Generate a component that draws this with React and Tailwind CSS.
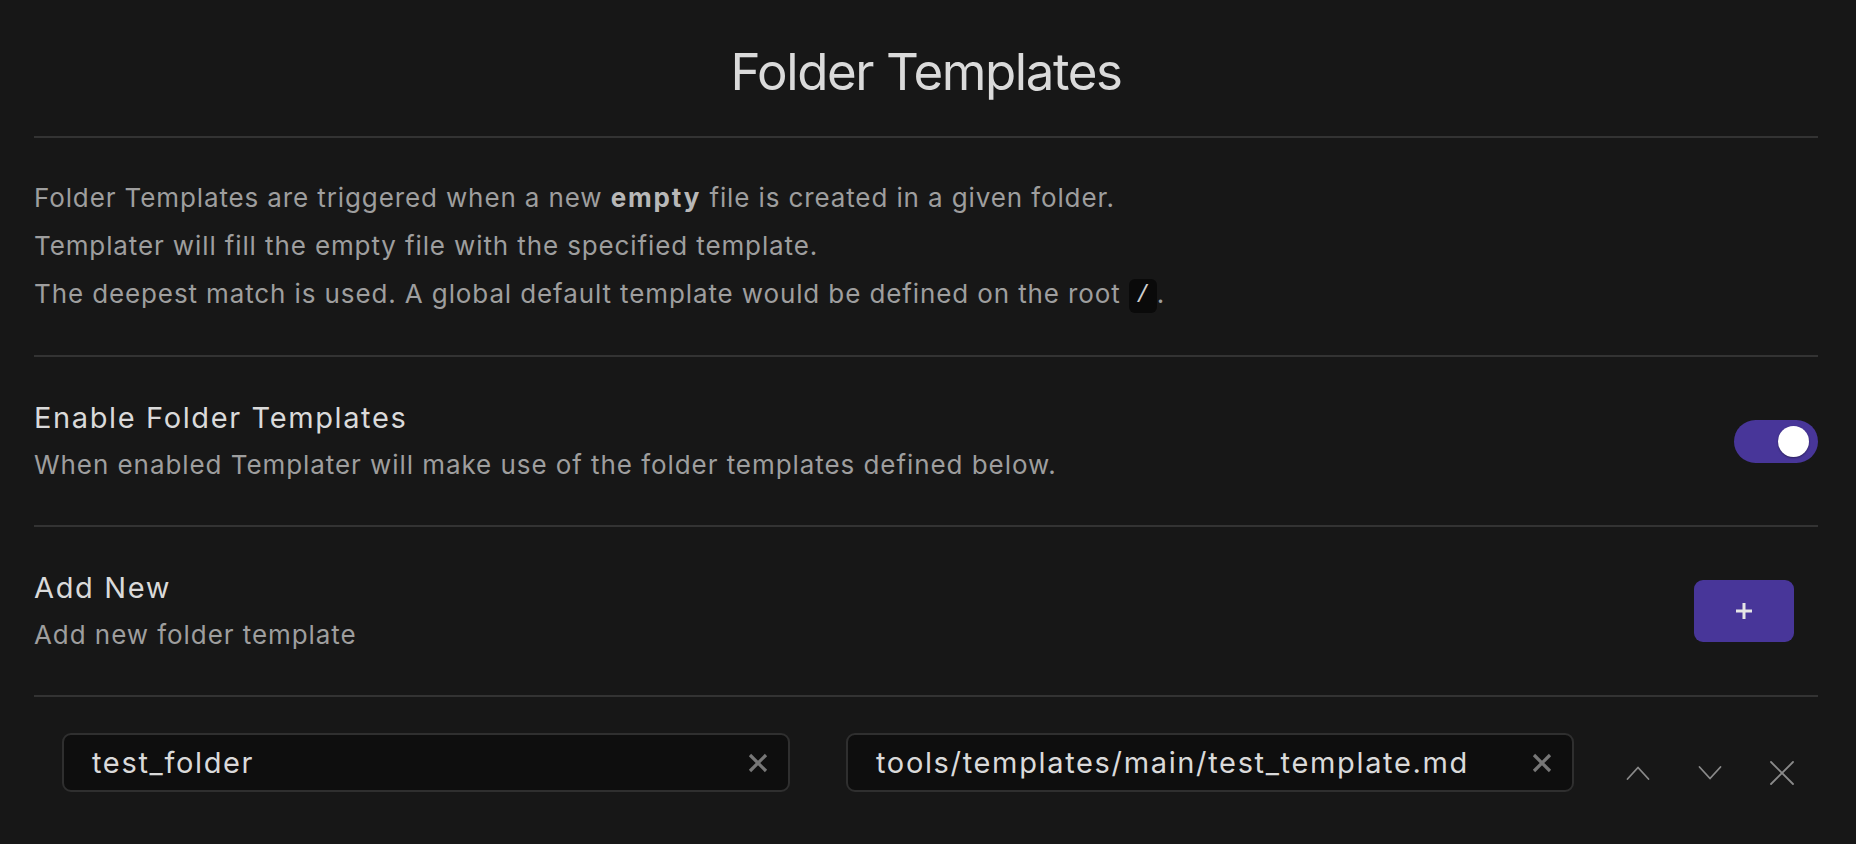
import React, { useState } from "react";

const ChevronUp = () => (
  <svg width="24" height="24" viewBox="0 0 24 24" fill="none" stroke="#8a8a8a" strokeWidth="1.8" strokeLinecap="round" strokeLinejoin="round">
    <polyline points="1.5,18 12,6.5 22.5,18" />
  </svg>
);

const ChevronDown = () => (
  <svg width="24" height="24" viewBox="0 0 24 24" fill="none" stroke="#8a8a8a" strokeWidth="1.8" strokeLinecap="round" strokeLinejoin="round">
    <polyline points="1.5,6 12,17.5 22.5,6" />
  </svg>
);

const Cross = () => (
  <svg width="24" height="24" viewBox="0 0 24 24" fill="none" stroke="#8a8a8a" strokeWidth="1.8" strokeLinecap="round">
    <line x1="1" y1="1" x2="23" y2="23" />
    <line x1="23" y1="1" x2="1" y2="23" />
  </svg>
);

const Clear = () => (
  <svg width="20" height="20" viewBox="0 0 20 20" fill="none" stroke="#777777" strokeWidth="3.2">
    <line x1="2" y1="2" x2="18" y2="18" />
    <line x1="18" y1="2" x2="2" y2="18" />
  </svg>
);

function Divider() {
  return <div className="h-[2px] bg-[#333333]"></div>;
}

function SettingRow({ name, desc, children }) {
  return (
    <div className="h-[168px] flex items-center justify-between">
      <div className="flex flex-col">
        <div className="text-[29px] leading-[47px] tracking-[0.056em] text-[#dadada]">{name}</div>
        <div className="text-[26px] leading-[48px] tracking-[0.036em] text-[#9e9e9e]">{desc}</div>
      </div>
      {children}
    </div>
  );
}

function SearchBox({ value }) {
  return (
    <div className="w-[728px] h-[59px] flex items-center justify-between rounded-[9px] border-2 border-[#2f2f2f] bg-[#0e0e0e] pl-[28px] pr-[20px]">
      <span className="text-[29px] tracking-[0.057em] text-[#dadada]">{value}</span>
      <Clear />
    </div>
  );
}

export default function App() {
  const [enabled, setenabled] = useState(true);

  return (
    <div className="min-h-screen bg-[#171717] pl-[34px] pr-[38px] font-[family-name:Inter,sans-serif]">
      <div className="h-[136px] pt-[9px] flex items-center justify-center">
        <h2 className="text-[51px] tracking-[-0.028em] text-[#dadada]">Folder Templates</h2>
      </div>
      <Divider />
      <div className="pt-[36px] pb-[37px] text-[26px] leading-[48px] tracking-[0.034em] text-[#9e9e9e]">
        <div>
          Folder Templates are triggered when a new{" "}
          <strong className="font-bold tracking-[0.07em] text-[#b8b8b8]">empty</strong> file is created in a given folder.
        </div>
        <div>Templater will fill the empty file with the specified template.</div>
        <div>
          The deepest match is used. A global default template would be defined on the root{" "}
          <code className="inline-block align-middle h-[34px] px-[7px] rounded-[6px] bg-[#0a0a0a] text-[23px] leading-[34px] tracking-normal text-[#cfcfcf] font-[family-name:'Liberation_Mono',monospace]">/</code>
          .
        </div>
      </div>
      <Divider />
      <SettingRow name="Enable Folder Templates" desc="When enabled Templater will make use of the folder templates defined below.">
        <button
          onClick={() => setenabled(!enabled)}
          className={
            enabled
              ? "w-[84px] h-[43px] rounded-full bg-[#483699] flex items-center justify-end pr-[9px]"
              : "w-[84px] h-[43px] rounded-full bg-[#3a3a3a] flex items-center justify-start pl-[9px]"
          }
        >
          <span className="w-[31px] h-[31px] rounded-full bg-white shadow-[0_1px_2px_rgba(0,0,0,0.4)]"></span>
        </button>
      </SettingRow>
      <Divider />
      <SettingRow name="Add New" desc="Add new folder template">
        <button className="mr-[24px] w-[100px] h-[62px] rounded-[9px] bg-[#483699] flex items-center justify-center">
          <svg width="16" height="16" viewBox="0 0 16 16" stroke="#e6e6e6" strokeWidth="3">
            <line x1="8" y1="0" x2="8" y2="16" />
            <line x1="0" y1="8" x2="16" y2="8" />
          </svg>
        </button>
      </SettingRow>
      <Divider />
      <div className="pt-[36px] pl-[28px] flex items-start">
        <SearchBox value="test_folder" />
        <div className="ml-[56px]">
          <SearchBox value="tools/templates/main/test_template.md" />
        </div>
        <div className="ml-[52px] mt-[28px] flex items-center gap-[48px]">
          <ChevronUp />
          <ChevronDown />
          <Cross />
        </div>
      </div>
    </div>
  );
}
